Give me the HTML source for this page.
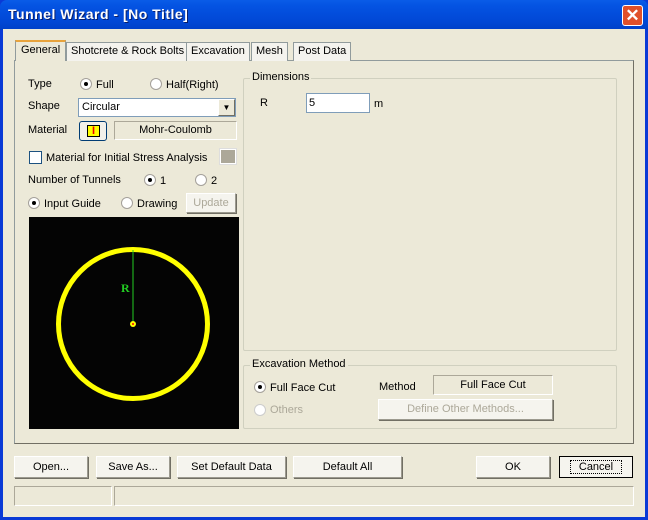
<!DOCTYPE html>
<html><head><style>
*{box-sizing:border-box;margin:0;padding:0}
body{width:648px;height:520px;overflow:hidden;background:#0a3ad6;font-family:Tahoma,"Liberation Sans",sans-serif;font-size:11px;color:#000;position:relative}
.a{position:absolute}
.win{left:3px;top:29px;width:642px;height:488px;background:#ece9d8}
.title{left:0;top:0;width:648px;height:30px;background:linear-gradient(#0a5ce8,#0453e2 20%,#0148d6 70%,#0040c8);border-radius:7px 7px 0 0}
.btn{position:absolute;background:#f5f4ee;border:1px solid #9c9a8f;border-top-color:#fff;border-left-color:#fff;box-shadow:1px 1px 0 #716f64;text-align:center;line-height:20px;height:22px}
.sunk{position:absolute;border:1px solid #aca899;border-bottom-color:#fff;border-right-color:#fff}
.radio{position:absolute;width:12px;height:12px;border-radius:50%;border:1px solid #a4a09a;background:#fff}
.radio.on::after{content:"";position:absolute;left:3px;top:3px;width:4px;height:4px;border-radius:50%;background:#000}
.grp{position:absolute;border:1px solid #d0d0bf;border-radius:2px}
.grp span{position:absolute;top:-8px;left:6px;background:#ece9d8;padding:0 2px}
.tab{position:absolute;top:42px;height:19px;border:1px solid #919b9c;border-bottom:none;background:#f4f3ee;padding:0 4px;line-height:17px}
</style></head><body>
<div class="a title"></div>
<div class="a" style="left:8px;top:6px;color:#fff;font-weight:bold;font-size:14px;letter-spacing:.5px;text-shadow:1px 1px #0a1f6a">Tunnel Wizard - [No Title]</div>
<div class="a" style="left:622px;top:5px;width:21px;height:21px;border:1px solid #fff;border-radius:3px;background:#e0502a;color:#fff;font-size:17px;font-weight:bold;text-align:center;line-height:19px">✕</div>
<div class="a win"></div>
<div class="a" style="left:14px;top:60px;width:620px;height:384px;border:1px solid #919b9c;border-right-color:#716f64;border-bottom-color:#716f64;background:#ece9d8"></div>
<div class="tab" style="left:66px;">Shotcrete &amp; Rock Bolts</div>
<div class="tab" style="left:186px;">Excavation</div>
<div class="tab" style="left:251px;">Mesh</div>
<div class="tab" style="left:293px;">Post Data</div>
<div class="tab" style="left:15px;top:40px;height:21px;background:#ece9d8;border-top:2px solid #e8a33c;padding:0 5px;line-height:17px">General</div>
<div class="a" style="left:28px;top:78px">Type</div>
<div class="radio on" style="left:80px;top:78px"></div><div class="a" style="left:96px;top:79px">Full</div>
<div class="radio" style="left:150px;top:78px"></div><div class="a" style="left:166px;top:79px">Half(Right)</div>
<div class="a" style="left:28px;top:100px">Shape</div>
<div class="a" style="left:78px;top:98px;width:158px;height:19px;background:#fff;border:1px solid #7f9db9;padding-left:3px;line-height:17px">Circular</div>
<div class="a" style="left:218px;top:99px;width:17px;height:17px;background:#ece9d8;border:1px solid #fff;border-right-color:#716f64;border-bottom-color:#716f64;text-align:center;font-size:8px;line-height:16px">▼</div>
<div class="a" style="left:28px;top:124px">Material</div>
<div class="a" style="left:79px;top:121px;width:28px;height:20px;border:1px solid #003c74;border-radius:3px;background:#f2f1ea"><div class="a" style="left:7px;top:3px;width:13px;height:12px;background:#ff0;border:1px solid #000;color:#e00;font-weight:bold;font-size:11px;line-height:10px;text-align:center">I</div></div>
<div class="sunk" style="left:114px;top:121px;width:123px;height:19px;text-align:center;line-height:17px">Mohr-Coulomb</div>
<div class="a" style="left:29px;top:151px;width:13px;height:13px;border:1px solid #1c5180;background:#fff"></div>
<div class="a" style="left:46px;top:152px">Material for Initial Stress Analysis</div>
<div class="a" style="left:219px;top:148px;width:18px;height:17px;border:1px solid #ddd;background:#aca899;box-shadow:inset 0 0 0 1px #fff"></div>
<div class="a" style="left:28px;top:174px">Number of Tunnels</div>
<div class="radio on" style="left:144px;top:174px"></div><div class="a" style="left:160px;top:175px">1</div>
<div class="radio" style="left:195px;top:174px"></div><div class="a" style="left:211px;top:175px">2</div>
<div class="radio on" style="left:28px;top:197px"></div><div class="a" style="left:44px;top:198px">Input Guide</div>
<div class="radio" style="left:121px;top:197px"></div><div class="a" style="left:137px;top:198px">Drawing</div>
<div class="btn" style="left:186px;top:193px;width:50px;height:20px;line-height:18px;color:#aca899">Update</div>
<svg class="a" style="left:29px;top:217px" width="210" height="212"><rect x="0" y="0" width="210" height="212" fill="#040404"/><circle cx="104" cy="107" r="74.5" fill="none" stroke="#ff0" stroke-width="5"/><line x1="104" y1="33" x2="104" y2="107" stroke="#2c2" stroke-width="1"/><text x="92" y="75" fill="#2c2" font-family="Liberation Serif,serif" font-weight="bold" font-size="12">R</text><circle cx="104" cy="107" r="3" fill="#ff0"/><circle cx="104" cy="107" r="1" fill="#f00"/></svg>
<div class="grp" style="left:243px;top:78px;width:374px;height:273px"><span>Dimensions</span></div>
<div class="a" style="left:260px;top:97px">R</div>
<div class="a" style="left:306px;top:93px;width:64px;height:20px;background:#fff;border:1px solid #7f9db9;padding-left:2px;line-height:18px">5</div>
<div class="a" style="left:374px;top:98px">m</div>
<div class="grp" style="left:243px;top:365px;width:374px;height:64px"><span>Excavation Method</span></div>
<div class="radio on" style="left:254px;top:381px"></div><div class="a" style="left:270px;top:382px">Full Face Cut</div>
<div class="a" style="left:379px;top:381px">Method</div>
<div class="sunk" style="left:433px;top:375px;width:120px;height:20px;text-align:center;line-height:18px">Full Face Cut</div>
<div class="radio" style="left:254px;top:404px;border-color:#ccc"></div><div class="a" style="left:270px;top:404px;color:#aca899">Others</div>
<div class="btn" style="left:378px;top:399px;width:175px;height:21px;line-height:19px;color:#aca899">Define Other Methods...</div>
<div class="btn" style="left:14px;top:456px;width:74px;">Open...</div>
<div class="btn" style="left:96px;top:456px;width:74px;">Save As...</div>
<div class="btn" style="left:177px;top:456px;width:109px;">Set Default Data</div>
<div class="btn" style="left:293px;top:456px;width:109px;">Default All</div>
<div class="btn" style="left:476px;top:456px;width:74px;">OK</div>
<div class="btn" style="left:559px;top:456px;width:74px;border:1px solid #000;box-shadow:none"><span style="border:1px dotted #000;padding:0 8px">Cancel</span></div>
<div class="sunk" style="left:14px;top:486px;width:98px;height:20px"></div>
<div class="sunk" style="left:114px;top:486px;width:520px;height:20px"></div>
</body></html>
